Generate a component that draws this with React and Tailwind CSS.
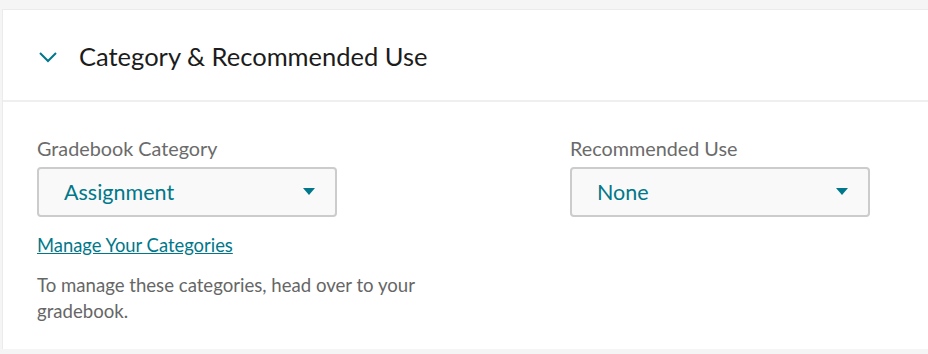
import React from "react";

function Select({ value }) {
  return (
    <div className="flex h-[50px] w-[300px] items-center justify-between rounded-[4px] border-2 border-[#cccccc] bg-[#f9f9f9] pl-[25px] pr-[20px]">
      <span className="text-[21.5px] text-[#00778a]">{value}</span>
      <svg width="12" height="8" viewBox="0 0 12 8">
        <polygon points="0,0 12,0 6,7" fill="#00778a" />
      </svg>
    </div>
  );
}

export default function App() {
  return (
    <div className="h-[354px] w-[928px] overflow-hidden bg-[#f5f5f5] pt-[9px] pl-[2px]" style={{ fontFamily: "Lato, 'Open Sans', sans-serif" }}>
      <div className="h-[340px] border-l border-t border-[#ebebeb] bg-white">
        <div className="flex h-[90px] items-center gap-[21px] pl-[35px]">
          <svg width="20" height="12" viewBox="0 0 20 12" className="mt-[4px]">
            <polyline points="2,2 10,10 18,2" fill="none" stroke="#00778a" strokeWidth="2" />
          </svg>
          <h2 className="mt-[2px] text-[25.5px] text-[#1c1c1c]">Category &amp; Recommended Use</h2>
        </div>
        <div className="h-[2px] bg-[#efefef]" />
        <div className="flex pl-[34px] pt-[34px]">
          <div className="w-[533px]">
            <div className="text-[19.8px] leading-[24px] text-[#6b6b6b]">Gradebook Category</div>
            <div className="mt-[7px]">
              <Select value="Assignment" />
            </div>
            <a href="#" className="mt-[16px] block text-[18.4px] leading-[24px] text-[#00778a] underline">
              Manage Your Categories
            </a>
            <p className="mt-[15px] w-[400px] text-[18.6px] leading-[26px] text-[#666666]">
              To manage these categories, head over to your gradebook.
            </p>
          </div>
          <div>
            <div className="text-[19.8px] leading-[24px] text-[#6b6b6b]">Recommended Use</div>
            <div className="mt-[7px]">
              <Select value="None" />
            </div>
          </div>
        </div>
      </div>
    </div>
  );
}
